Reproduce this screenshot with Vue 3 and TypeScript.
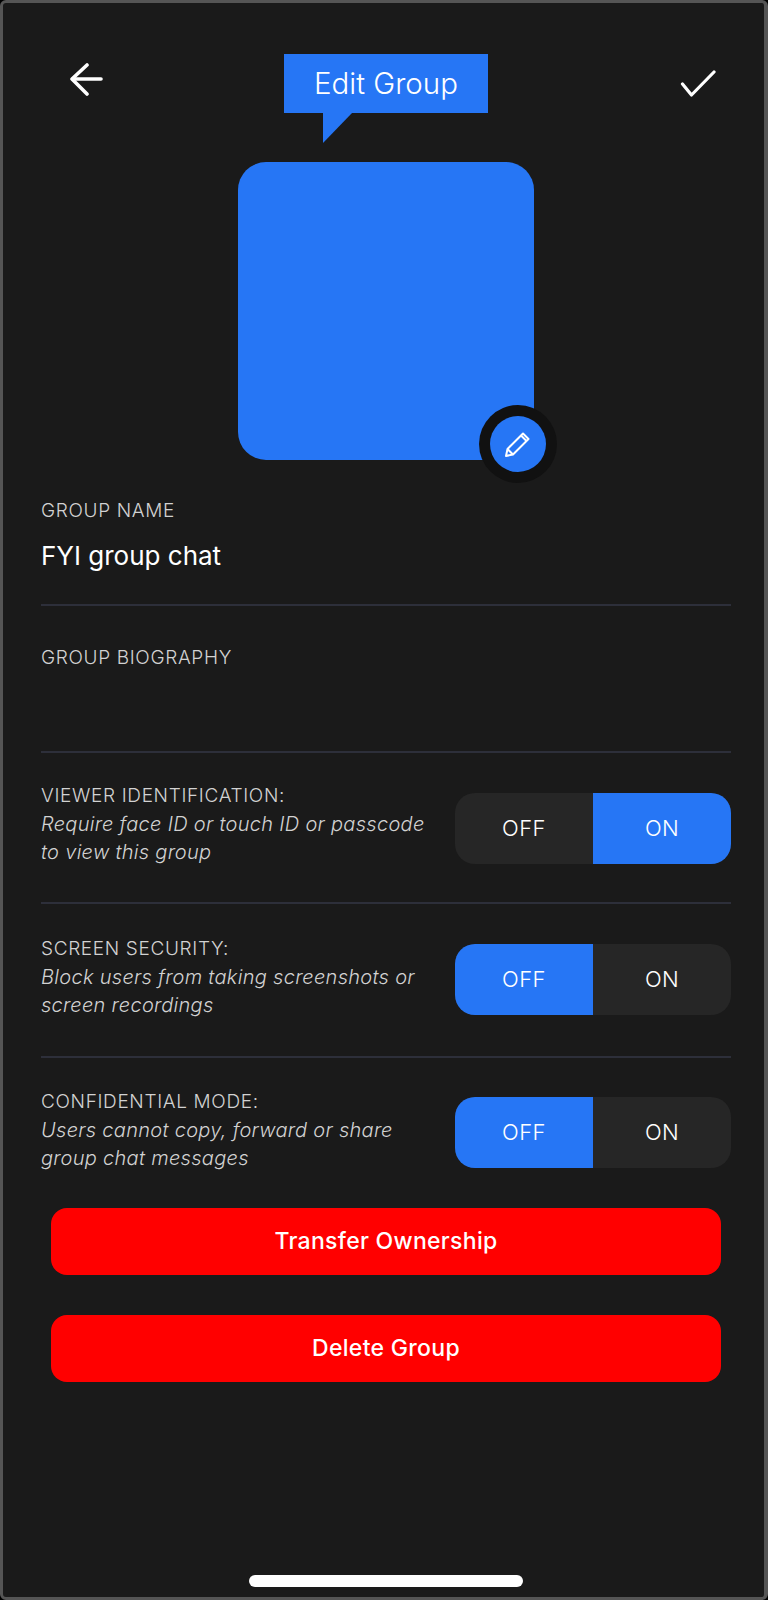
<script setup lang="ts">
import { ref } from 'vue'

interface Setting {
    title: string
    lines: string[]
    on: boolean
}

const settings = ref<Setting[]>([
    {
        title: 'VIEWER IDENTIFICATION:',
        lines: ['Require face ID or touch ID or passcode', 'to view this group'],
        on: true
    },
    {
        title: 'SCREEN SECURITY:',
        lines: ['Block users from taking screenshots or', 'screen recordings'],
        on: false
    },
    {
        title: 'CONFIDENTIAL MODE:',
        lines: ['Users cannot copy, forward or share', 'group chat messages'],
        on: false
    }
])
</script>

<template>
    <div class="phone">
        <header class="header">
            <svg class="back" width="34" height="34" viewBox="0 0 34 34" fill="none" stroke="#fff" stroke-width="3.6" stroke-linecap="round" stroke-linejoin="round">
                <path d="M31 16H3" />
                <path d="M17 2L2 16l15 15" />
            </svg>
            <div class="bubble">Edit Group</div>
            <svg class="check" width="38" height="28" viewBox="0 0 38 28" fill="none" stroke="#fff" stroke-width="3.2" stroke-linecap="round" stroke-linejoin="round">
                <path d="M3.500 15l9 11L35 3" />
            </svg>
        </header>

        <div class="avatar">
            <div class="badge">
                <div class="badge-inner">
                    <svg width="30" height="30" viewBox="0 0 30 30" fill="none" stroke="#fff" stroke-width="2" stroke-linejoin="round">
                        <path d="M3 27l1.5-7L20 4.500l5.500 5.500L10 25.500z" />
                        <path d="M18 6.500l5.500 5.500" />
                        <path d="M4.500 20l5.500 5.500" />
                    </svg>
                </div>
            </div>
        </div>

        <section class="field name-field">
            <div class="label">GROUP NAME</div>
            <div class="value">FYI group chat</div>
        </section>
        <section class="field bio-field">
            <div class="label">GROUP BIOGRAPHY</div>
        </section>

        <section
            v-for="(item, i) in settings"
            :key="item.title"
            class="setting"
            :class="{ first: i === 0, last: i === settings.length - 1 }"
        >
            <div class="setting-text">
                <div class="label">{{ item.title }}</div>
                <div v-for="line in item.lines" :key="line" class="hint">{{ line }}</div>
            </div>
            <div class="toggle">
                <div class="segment" :class="{ active: !item.on }">OFF</div>
                <div class="segment" :class="{ active: item.on }">ON</div>
            </div>
        </section>

        <button class="danger transfer">Transfer Ownership</button>
        <button class="danger delete">Delete Group</button>

        <div class="home-bar"></div>
    </div>
</template>

<style>
html, body {
    background: #000;
}
</style>

<style scoped>
.phone {
    position: relative;
    box-sizing: border-box;
    width: 768px;
    height: 1600px;
    display: flex;
    flex-direction: column;
    padding: 51px 33px 10px 38px;
    border: 3px solid #555;
    border-right-width: 4px;
    border-radius: 6px;
    background: #1a1a1a;
    color: #fff;
    font-family: Inter, "Liberation Sans", sans-serif;
}

.header {
    display: grid;
    grid-template-columns: 1fr auto 1fr;
}

.back {
    justify-self: start;
    margin: 9px 0 0 29px;
}

.check {
    justify-self: end;
    margin: 15px 14px 0 0;
}

.bubble {
    position: relative;
    width: 204px;
    height: 59px;
    background: #2676f5;
    font-size: 29.500px;
    font-weight: 300;
    line-height: 59px;
    text-align: center;
}

.bubble::after {
    content: "";
    position: absolute;
    left: 39px;
    top: 59px;
    width: 29px;
    height: 30px;
    background: #2676f5;
    clip-path: polygon(0 0, 100% 0, 0 100%);
}

.avatar {
    position: relative;
    align-self: center;
    width: 296px;
    height: 298px;
    margin-top: 49px;
    border-radius: 28px;
    background: #2676f5;
}

.badge {
    position: absolute;
    left: 241px;
    top: 243px;
    width: 78px;
    height: 78px;
    display: flex;
    align-items: center;
    justify-content: center;
    border-radius: 50%;
    background: #111;
}

.badge-inner {
    width: 56px;
    height: 56px;
    display: flex;
    align-items: center;
    justify-content: center;
    border-radius: 50%;
    background: #2676f5;
}

.field {
    border-bottom: 2px solid #2d2f3a;
}

.name-field {
    margin-top: 41px;
    padding-bottom: 32px;
}

.bio-field {
    padding-top: 42px;
    padding-bottom: 83px;
}

.label {
    color: #d2d2d2;
    font-size: 19px;
    font-weight: 300;
    letter-spacing: 0.65px;
    line-height: 20px;
}

.value {
    margin-top: 19px;
    font-size: 26px;
    font-weight: 400;
    line-height: 32px;
}

.setting {
    display: flex;
    justify-content: space-between;
    align-items: flex-start;
    height: 121px;
    padding-top: 31px;
    border-bottom: 2px solid #2d2f3a;
}

.setting.first {
    height: 120px;
    padding-top: 29px;
}

.setting.last {
    height: 120px;
    padding-top: 30px;
    border-bottom: none;
}

.setting-text .label {
    line-height: 28px;
}

.hint {
    color: #d2d2d2;
    font-size: 20px;
    font-style: italic;
    font-weight: 300;
    letter-spacing: 0.3px;
    line-height: 28px;
}

.toggle {
    display: flex;
    width: 276px;
    height: 71px;
    margin-top: 9px;
    overflow: hidden;
    border-radius: 20px;
    background: #262626;
}

.setting.first .toggle {
    margin-top: 11px;
}

.segment {
    flex: 1;
    font-size: 22px;
    font-weight: 300;
    letter-spacing: 0.4px;
    line-height: 71px;
    text-align: center;
}

.segment.active {
    background: #2676f5;
}

.danger {
    display: block;
    height: 67px;
    margin: 0 10px;
    padding: 0 0 2px;
    border: none;
    border-radius: 16px;
    background: #f00;
    color: #fff;
    font-family: inherit;
    font-size: 23px;
    font-weight: 500;
    letter-spacing: 0.3px;
}

.delete {
    margin-top: 40px;
}

.home-bar {
    align-self: center;
    width: 274px;
    height: 12px;
    margin-top: auto;
    border-radius: 6px;
    background: #fff;
}
</style>
